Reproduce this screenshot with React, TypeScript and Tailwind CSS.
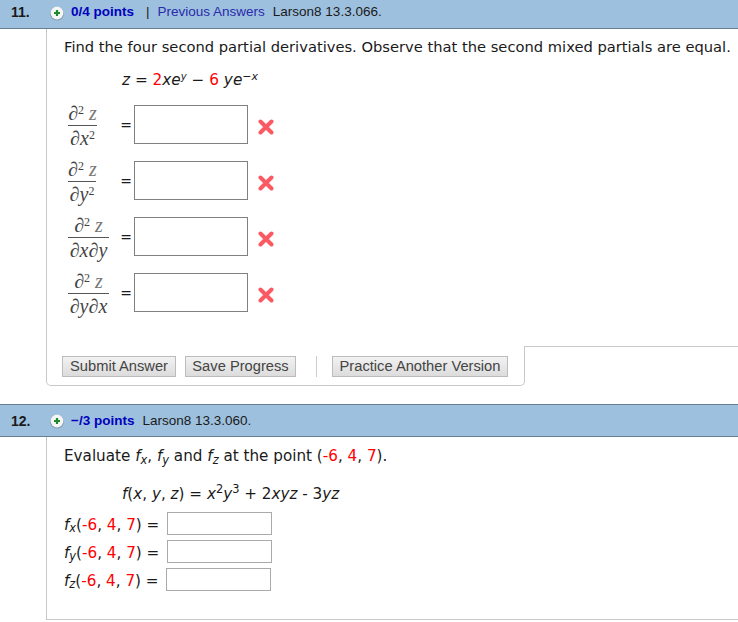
import React from "react";

const R = ({ children }: { children: React.ReactNode }) => (
  <span className="text-[#ff0000]">{children}</span>
);

const PlusIcon = () => (
  <svg width="16" height="16" viewBox="0 0 16 16" className="shrink-0">
    <circle cx="8" cy="8.6" r="7" fill="#6f7f8c" opacity="0.55" />
    <circle cx="8" cy="8" r="6.4" fill="#f6f6f6" />
    <path d="M8 5v6M5 8h6" stroke="#1f8a2a" strokeWidth="2.2" />
  </svg>
);

const XMark = () => (
  <svg width="16" height="16" viewBox="0 0 16 16" className="shrink-0">
    <path d="M2.5 2.5l11 11M13.5 2.5l-11 11" stroke="#fb5a63" strokeWidth="4" strokeLinecap="round" />
  </svg>
);

const Frac = ({ bottom, w }: { bottom: React.ReactNode; w: string }) => (
  <div className={`flex ${w} flex-col font-['Liberation_Serif',serif] text-[#444]`}>
    <div className="h-[24px] border-b border-[#555] text-center text-[20px] leading-[23px] whitespace-nowrap">
      ∂<sup className="text-[12px] leading-none">2</sup> <i className="text-[#777]">z</i>
    </div>
    <div className="h-[21px] text-center text-[20px] leading-[25px] whitespace-nowrap">{bottom}</div>
  </div>
);

const derivs = [
  { bottom: <>∂<i>x</i><sup className="text-[12px] leading-none">2</sup></>, w: "w-[29px]" },
  { bottom: <>∂<i>y</i><sup className="text-[12px] leading-none">2</sup></>, w: "w-[28px]" },
  { bottom: <>∂<i>x</i>∂<i>y</i></>, w: "w-[41px]" },
  { bottom: <>∂<i>y</i>∂<i>x</i></>, w: "w-[41px]" },
];

const Btn = ({ label, w }: { label: string; w: string }) => (
  <button className={`h-[21px] ${w} shrink-0 border border-[#bcbcbc] bg-gradient-to-b from-[#f2f2f2] to-[#dcdcdc] text-[14.7px] leading-[19px] whitespace-nowrap text-[#444]`}>
    {label}
  </button>
);

const evalRows = [
  { sub: "x", ml: "ml-0" },
  { sub: "y", ml: "ml-0" },
  { sub: "z", ml: "-ml-px" },
];

export default function App() {
  return (
    <div className="h-[622px] w-[738px] overflow-hidden bg-white font-['DejaVu_Sans',Verdana,sans-serif] text-[14.69px] text-[#1a1a1a]">
      {/* header 11, cut off at the top of the shot */}
      <div className="flex h-[29px] items-center border-b border-[#66808f] bg-[#9dc0de] pb-[3px] font-['Liberation_Sans',Arial,sans-serif] text-[13.5px] text-[#1a1a1a]">
        <b className="w-[49px] pl-[11px] text-[14px]">11.</b>
        <PlusIcon />
        <b className="ml-[6px] text-[#0000bb]">0/4 points</b>
        <span className="ml-[12px]">|</span>
        <span className="ml-[8px] text-[#2a2aaa]">Previous Answers</span>
        <span className="ml-[8px]">Larson8 13.3.066.</span>
      </div>

      {/* question 11 */}
      <div className="ml-[46px] h-[317px] border-l border-[#c8c8c8] pl-[17px] pt-[7px] whitespace-nowrap">
        <p>Find the four second partial derivatives. Observe that the second mixed partials are equal.</p>
        <p className="mt-[11px] ml-[58px] text-[15.3px]">
          <i>z</i> = <R>2</R><i>xe<sup className="text-[10px]">y</sup></i> − <R>6</R> <i>ye<sup className="text-[11px]">−x</sup></i>
        </p>
        <div className="mt-[13px] -ml-[17px] flex flex-col gap-[17px] pl-[21px]">
          {derivs.map((d, i) => (
            <div key={i} className="flex h-[39px] items-center">
              <div className="mt-[1px] w-[44px]">
                <Frac w={d.w} bottom={d.bottom} />
              </div>
              <span className="ml-[6px] mt-[2px] w-[16px] text-center text-[14px]">=</span>
              <div className="h-[39px] w-[114px] border border-[#808080] bg-white" />
              <div className="ml-[10px] mt-[5px]">
                <XMark />
              </div>
            </div>
          ))}
        </div>
      </div>

      <div className="ml-[46px] flex h-[40px]">
        <div className="flex w-[479px] shrink-0 items-start gap-[9px] rounded-b-[5px] border-x border-b border-[#c8c8c8] pl-[15px] pt-[10px] font-['Liberation_Sans',Arial,sans-serif]">
          <Btn label="Submit Answer" w="w-[114px]" />
          <Btn label="Save Progress" w="w-[111px]" />
          <div className="ml-[11px] h-[21px] border-l border-[#cccccc]" />
          <div className="ml-[6px] flex">
            <Btn label="Practice Another Version" w="w-[176px]" />
          </div>
        </div>
        <div className="flex-1 border-t border-[#c8c8c8]" />
      </div>

      {/* header 12 */}
      <div className="mt-[18px] flex h-[33px] items-center border-y border-[#66808f] bg-[#9dc0de] pt-[1px] font-['Liberation_Sans',Arial,sans-serif] text-[13.5px] text-[#1a1a1a]">
        <b className="w-[49px] pl-[11px] text-[14px]">12.</b>
        <PlusIcon />
        <b className="ml-[6px] text-[#0000bb]">−/3 points</b>
        <span className="ml-[8px]">Larson8 13.3.060.</span>
      </div>

      {/* question 12 */}
      <div className="ml-[46px] h-[183px] border-b border-l border-[#c8c8c8] pl-[17px] pt-[8px] text-[15.2px]">
        <p>
          Evaluate <i>f<sub>x</sub></i>, <i>f<sub>y</sub></i> and <i>f<sub>z</sub></i> at the point (<R>-6</R>, <R>4</R>, <R>7</R>).
        </p>
        <p className="mt-[15px] ml-[58px]">
          <i>f</i>(<i>x</i>, <i>y</i>, <i>z</i>) = <i>x</i><sup>2</sup><i>y</i><sup>3</sup> + 2<i>xyz</i> - 3<i>yz</i>
        </p>
        <div className="mt-[6px] flex flex-col gap-[5px]">
          {evalRows.map((r) => (
            <div key={r.sub} className="flex h-[23px] items-start whitespace-nowrap">
              <span className="w-[103px] leading-[26px]">
                <i>f<sub>{r.sub}</sub></i>(<R>-6</R>, <R>4</R>, <R>7</R>) =
              </span>
              <div className={`h-[23px] w-[105px] shrink-0 border border-[#aaaaaa] ${r.ml}`} />
            </div>
          ))}
        </div>
      </div>
    </div>
  );
}
